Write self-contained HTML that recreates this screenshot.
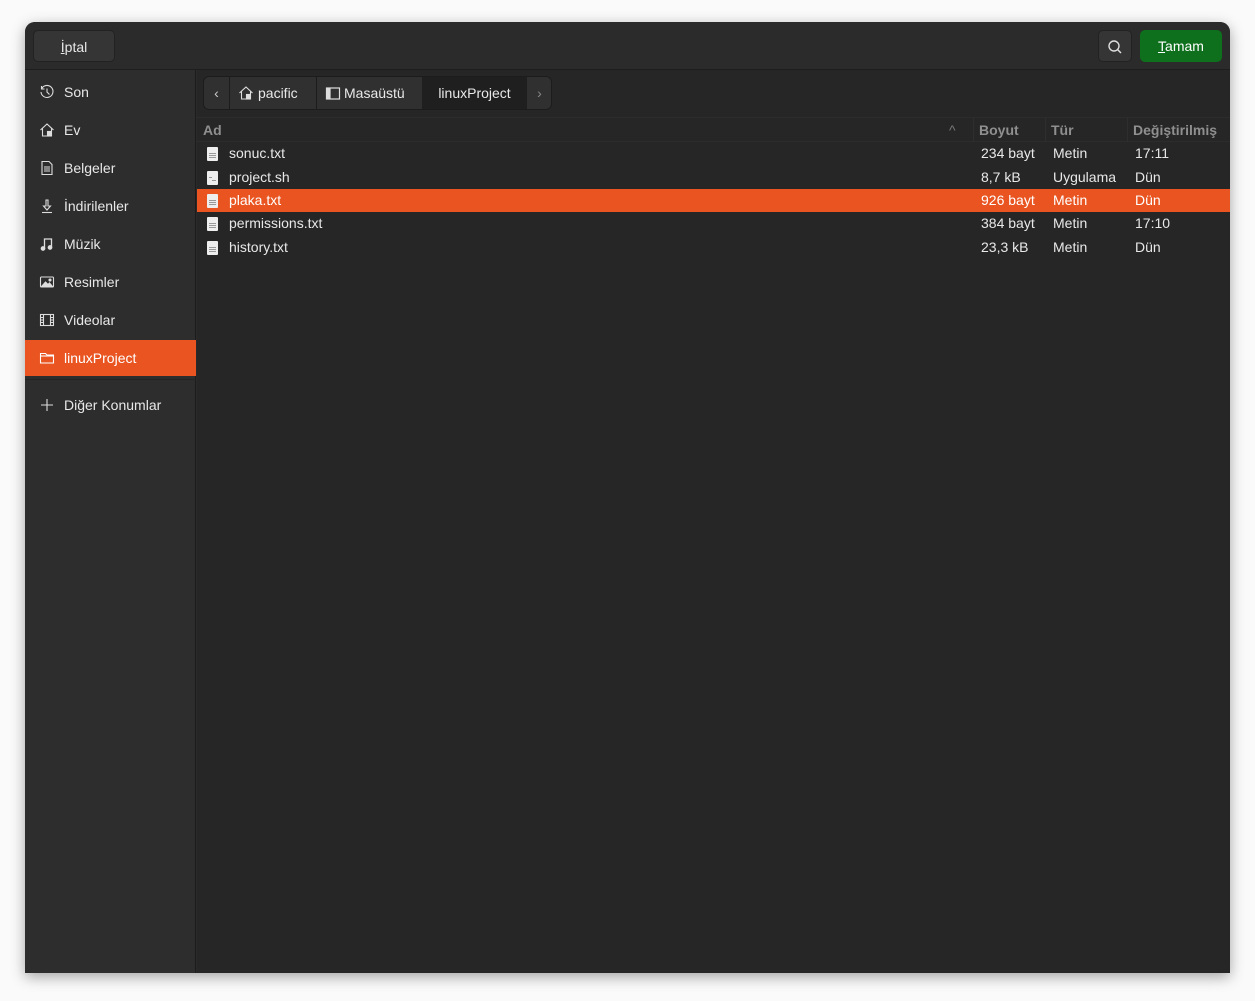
<!DOCTYPE html>
<html><head><meta charset="utf-8"><style>
*{box-sizing:border-box;margin:0;padding:0}
body{width:1255px;height:1001px;background:#fafafa;font-family:"Liberation Sans",sans-serif;font-size:14px;color:#e8e8e8;position:relative;overflow:hidden}
.win{position:absolute;left:25px;top:22px;width:1205px;height:951px;background:#2a2a2a;border-radius:10px 10px 0 0;box-shadow:0 4px 14px rgba(0,0,0,.35);overflow:hidden}
.hdr{position:absolute;left:0;top:0;width:100%;height:48px;background:#2b2b2b;border-bottom:1px solid #1e1e1e}
.btn{position:absolute;border-radius:5px;text-align:center;line-height:32px;font-size:14px}
.side{position:absolute;left:0;top:48px;width:171px;bottom:0;background:#2d2d2d;border-right:1px solid #1c1c1c}
.main{position:absolute;left:172px;top:48px;right:0;bottom:0;background:#262626}
.si{position:absolute;left:0;width:171px;height:36px;line-height:36px;padding-left:39px}
.si svg{position:absolute;left:14px;top:10px}
.abs{position:absolute}
.row{position:absolute;left:0;right:0;height:23px;line-height:23px}
.row span{position:absolute}
.sel{background:#e95420;color:#fff}
.fi{position:absolute;left:10px;top:5px;width:11px;height:14px;background:#eee;border-radius:1px}
.fi i{position:absolute;left:2px;height:1px;width:7px;background:#999}
</style></head><body>
<div class="win">
 <div class="hdr">
  <div class="btn" style="left:8px;top:8px;width:82px;height:32px;background:#353535;border:1px solid #222"><u>İ</u>ptal</div>
  <div class="btn" style="left:1073px;top:8px;width:34px;height:32px;background:#353535;border:1px solid #222">
   <svg width="16" height="16" viewBox="0 0 16 16" style="margin-top:8px"><circle cx="7" cy="7" r="5" fill="none" stroke="#ddd" stroke-width="1.4"/><path d="M10.5 10.5L14 14" stroke="#ddd" stroke-width="1.5"/></svg></div>
  <div class="btn" style="left:1115px;top:8px;width:82px;height:32px;background:#0e6f1c;color:#fff"><u>T</u>amam</div>
 </div>
 <div class="side">
  <div class="si" style="top:4px"><svg width="16" height="16" viewBox="0 0 16 16" fill="none" stroke="#ddd" stroke-width="1.1"><path d="M2.5 5A6 6 0 1 1 2 8"/><path d="M2.5 2v3h3"/><path d="M8 4.5V8l2.5 2.5"/></svg>Son</div>
  <div class="si" style="top:42px"><svg width="16" height="16" viewBox="0 0 16 16" fill="none" stroke="#ddd" stroke-width="1.1"><path d="M1.5 8L8 2l6.5 6M3.5 6.5V14h9V6.5"/><rect x="8.5" y="9.5" width="3" height="4.5" fill="#ddd"/></svg>Ev</div>
  <div class="si" style="top:80px"><svg width="16" height="16" viewBox="0 0 16 16" fill="none" stroke="#ddd" stroke-width="1.1"><path d="M3 1.5h7l3 3v10H3z"/><path d="M5 7h6M5 9h6M5 11h6"/></svg>Belgeler</div>
  <div class="si" style="top:118px"><svg width="16" height="16" viewBox="0 0 16 16" fill="none" stroke="#ddd" stroke-width="1.1"><path d="M7 2h2v6h2.5L8 12 4.5 8H7z"/><path d="M3 14.5h10"/></svg>İndirilenler</div>
  <div class="si" style="top:156px"><svg width="16" height="16" viewBox="0 0 16 16" fill="none" stroke="#ddd" stroke-width="1.3"><path d="M5.5 12.5V3h7v8.5"/><circle cx="4" cy="12.5" r="1.7" fill="#ddd"/><circle cx="11" cy="11.5" r="1.7" fill="#ddd"/></svg>Müzik</div>
  <div class="si" style="top:194px"><svg width="16" height="16" viewBox="0 0 16 16" fill="none" stroke="#ddd" stroke-width="1.1"><rect x="1.5" y="3" width="13" height="10" rx="1"/><path d="M3 12l3.5-4 2.5 2.5 1.5-1.5L13 12z" fill="#ddd"/><circle cx="11" cy="6" r="1" fill="#ddd"/></svg>Resimler</div>
  <div class="si" style="top:232px"><svg width="16" height="16" viewBox="0 0 16 16" fill="none" stroke="#ddd" stroke-width="1.1"><rect x="1.5" y="2.5" width="13" height="11"/><path d="M4.5 2.5v11M11.5 2.5v11M1.5 5.5h3M1.5 8h3M1.5 10.5h3M11.5 5.5h3M11.5 8h3M11.5 10.5h3"/></svg>Videolar</div>
  <div class="si sel" style="top:270px"><svg width="16" height="16" viewBox="0 0 16 16" fill="none" stroke="#fff" stroke-width="1.1"><path d="M1.5 3.5h5l1.5 1.5h6.5v8h-13z"/><path d="M1.5 6h13"/></svg>linuxProject</div>
  <div class="abs" style="left:0;top:309px;width:171px;height:1px;background:#242424"></div>
  <div class="si" style="top:317px"><svg width="16" height="16" viewBox="0 0 16 16" stroke="#ddd" stroke-width="1.1"><path d="M8 2v12M2 8h12"/></svg>Diğer Konumlar</div>
 </div>
 <div class="main">
  <div class="abs" style="left:6px;top:6px;width:349px;height:34px;border:1px solid #1c1c1c;border-radius:6px;background:#303030;overflow:hidden">
   <div class="abs" style="left:0;top:0;width:25px;height:32px;text-align:center;line-height:32px;color:#ccc">‹</div>
   <div class="abs" style="left:25px;top:0;width:1px;height:32px;background:#1c1c1c"></div>
   <div class="abs" style="left:26px;top:0;width:86px;height:32px;line-height:32px;padding-left:28px;color:#e8e8e8">
    <svg class="abs" style="left:8px;top:8px" width="16" height="16" viewBox="0 0 16 16" fill="none" stroke="#ddd" stroke-width="1.1"><path d="M1.5 8L8 2l6.5 6M3.5 6.5V14h9V6.5"/><rect x="8.5" y="9.5" width="3" height="4.5" fill="#ddd"/></svg>pacific</div>
   <div class="abs" style="left:112px;top:0;width:1px;height:32px;background:#1c1c1c"></div>
   <div class="abs" style="left:113px;top:0;width:105px;height:32px;line-height:32px;padding-left:27px">
    <svg class="abs" style="left:8px;top:9px" width="16" height="16" viewBox="0 0 16 16" fill="none" stroke="#ddd" stroke-width="1.2"><rect x="1.5" y="2" width="13" height="11"/><rect x="2" y="2.5" width="3" height="10" fill="#ddd"/></svg>Masaüstü</div>
   <div class="abs" style="left:218px;top:0;width:105px;height:32px;line-height:32px;background:#1f1f1f;text-align:center">linuxProject</div>
   <div class="abs" style="left:323px;top:0;width:25px;height:32px;text-align:center;line-height:32px;color:#888">›</div>
  </div>
  <div class="abs" style="left:0;top:47px;right:0;height:25px;border-top:1px solid #2c2c2c;border-bottom:1px solid #2c2c2c;color:#8f8f8f;font-weight:bold;line-height:24px">
   <span class="abs" style="left:6px">Ad</span>
   <span class="abs" style="left:752px;color:#777;font-weight:normal">^</span>
   <span class="abs" style="left:776px;top:0;width:1px;height:24px;background:#2e2e2e"></span>
   <span class="abs" style="left:782px">Boyut</span>
   <span class="abs" style="left:848px;top:0;width:1px;height:24px;background:#2e2e2e"></span>
   <span class="abs" style="left:854px">Tür</span>
   <span class="abs" style="left:930px;top:0;width:1px;height:24px;background:#2e2e2e"></span>
   <span class="abs" style="left:936px">Değiştirilmiş</span>
  </div>
  <div class="row" style="top:72px"><div class="fi"><i style="top:6px"></i><i style="top:8px"></i><i style="top:10px"></i></div><span style="left:32px">sonuc.txt</span><span style="left:784px">234 bayt</span><span style="left:856px">Metin</span><span style="left:938px">17:11</span></div>
  <div class="row" style="top:96px"><div class="fi"><i style="top:6px;width:3px"></i><i style="top:9px;left:5px;width:4px"></i></div><span style="left:32px">project.sh</span><span style="left:784px">8,7 kB</span><span style="left:856px">Uygulama</span><span style="left:938px">Dün</span></div>
  <div class="row sel" style="top:119px"><div class="fi"><i style="top:6px"></i><i style="top:8px"></i><i style="top:10px"></i></div><span style="left:32px">plaka.txt</span><span style="left:784px">926 bayt</span><span style="left:856px">Metin</span><span style="left:938px">Dün</span></div>
  <div class="row" style="top:142px"><div class="fi"><i style="top:6px"></i><i style="top:8px"></i><i style="top:10px"></i></div><span style="left:32px">permissions.txt</span><span style="left:784px">384 bayt</span><span style="left:856px">Metin</span><span style="left:938px">17:10</span></div>
  <div class="row" style="top:166px"><div class="fi"><i style="top:6px"></i><i style="top:8px"></i><i style="top:10px"></i></div><span style="left:32px">history.txt</span><span style="left:784px">23,3 kB</span><span style="left:856px">Metin</span><span style="left:938px">Dün</span></div>
 </div>
</div>
</body></html>
